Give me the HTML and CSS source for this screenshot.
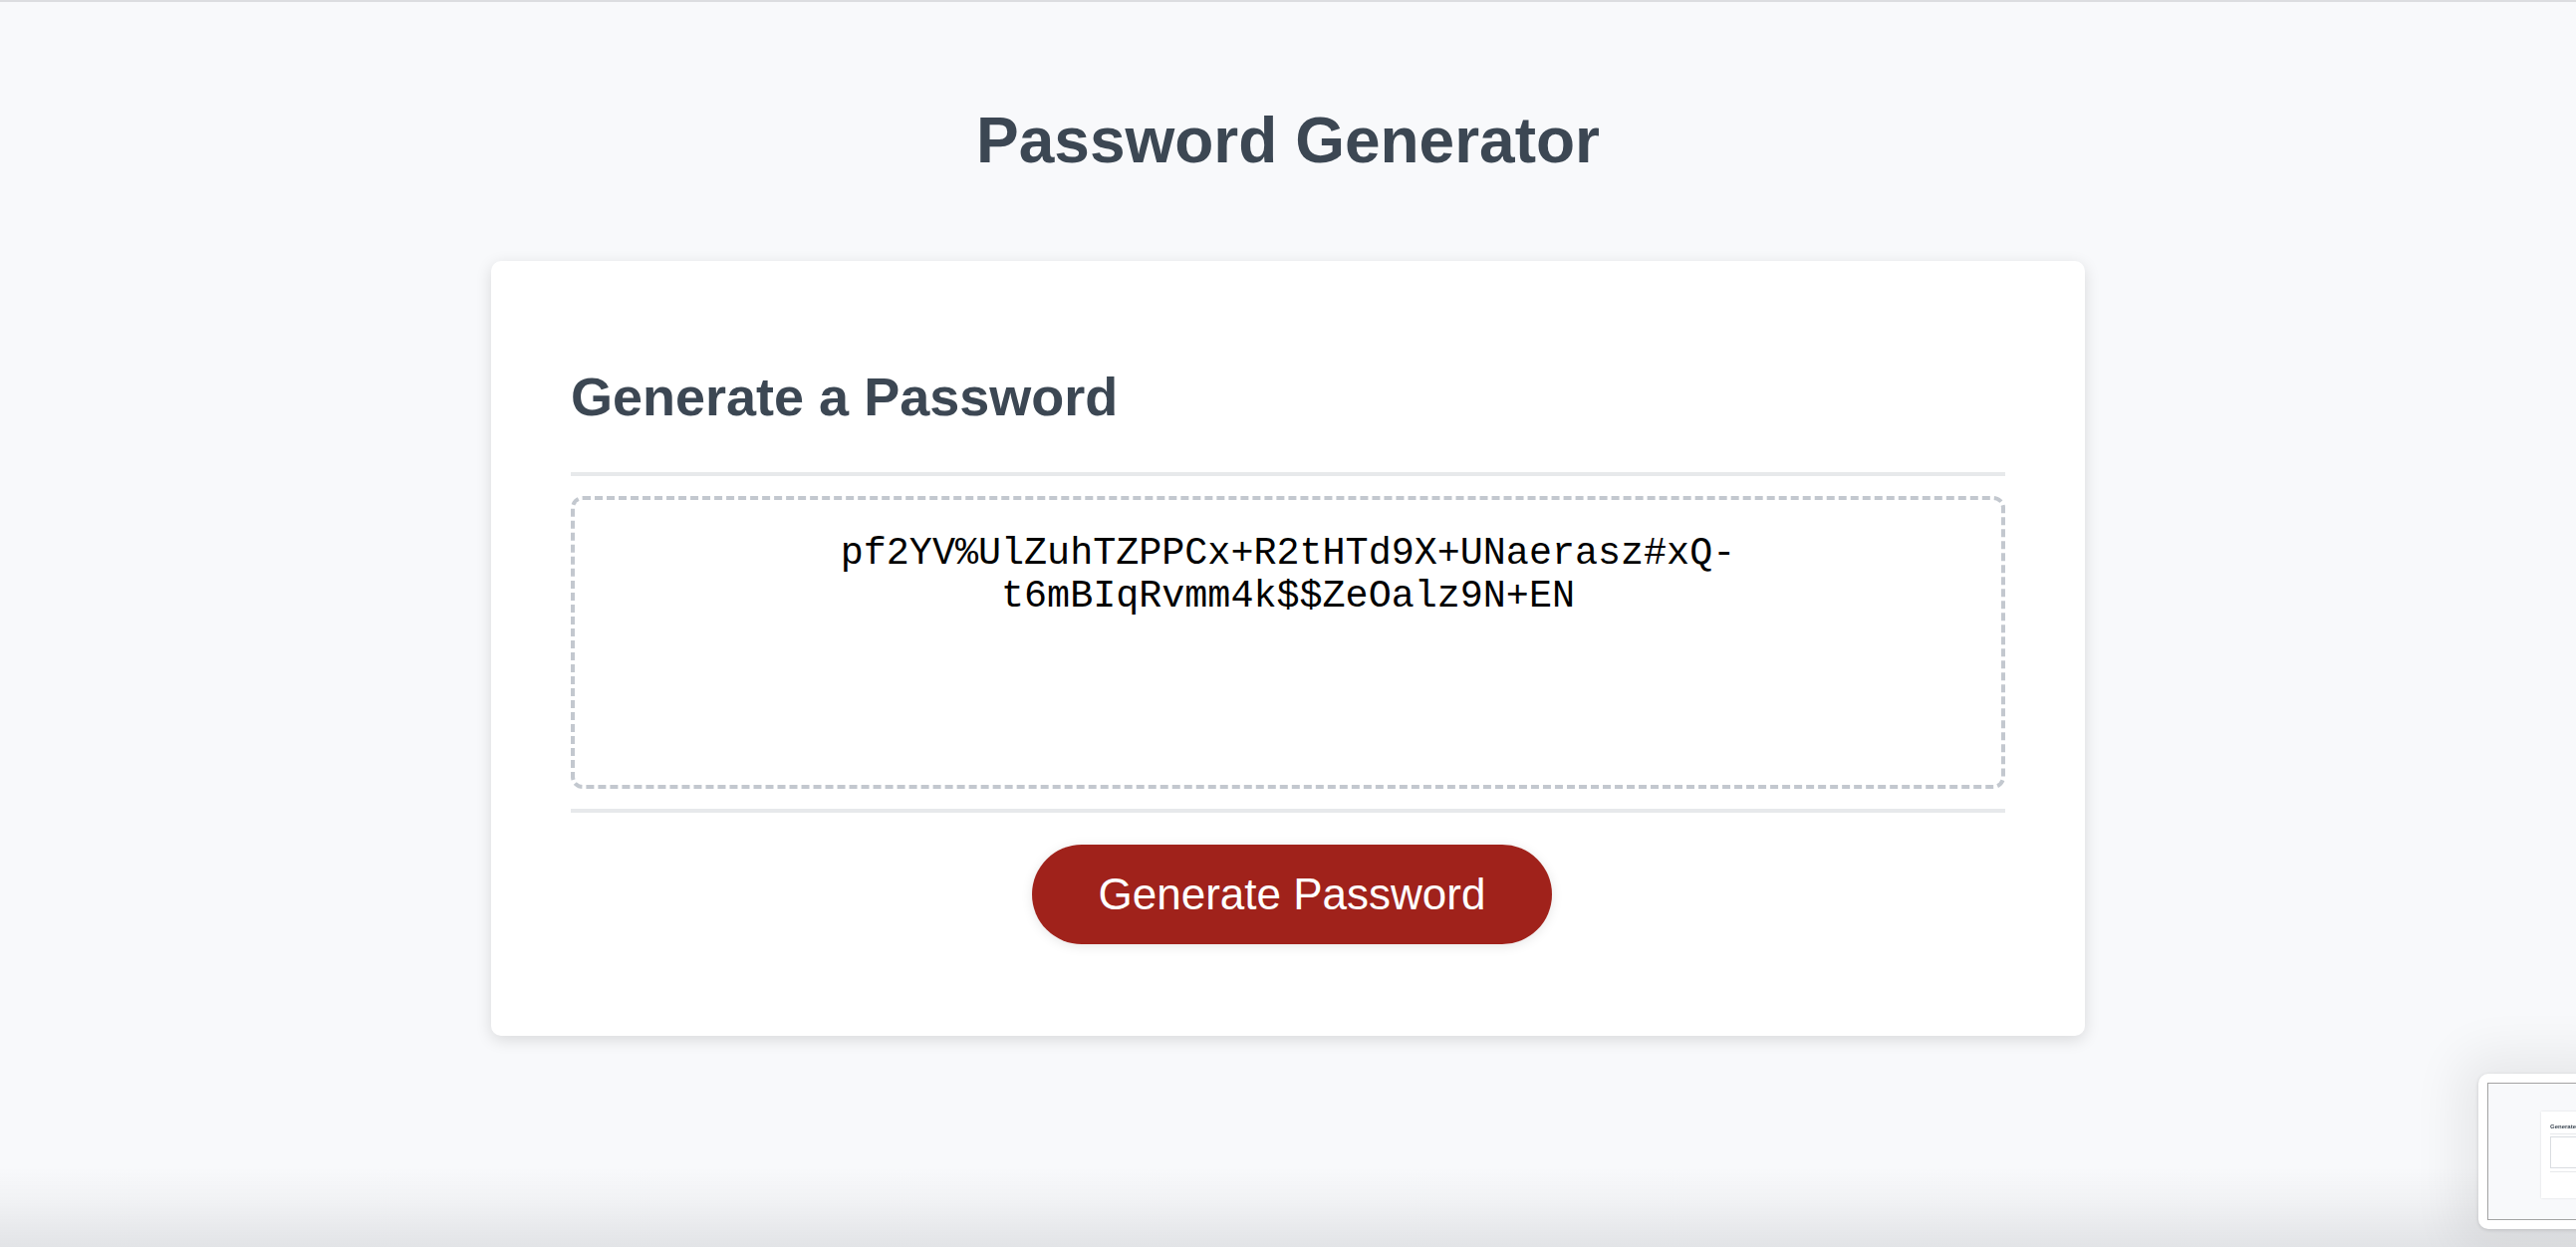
FILE: index.html
```html
<!DOCTYPE html>
<html lang="en">
<head>
<meta charset="UTF-8">
<title>Password Generator</title>
<link rel="stylesheet" href="styles.css">
</head>
<body>
<div class="topline"></div>
<div class="wrapper">
  <header class="page-header">
    <h1>Password Generator</h1>
  </header>
  <div class="card">
    <div class="card-header">
      <h2>Generate a Password</h2>
    </div>
    <div class="card-body">
      <textarea readonly class="password" aria-label="Generated Password">pf2YV%UlZuhTZPPCx+R2tHTd9X+UNaerasz#xQ-t6mBIqRvmm4k$$ZeOalz9N+EN</textarea>
    </div>
    <div class="card-footer">
      <button class="btn">Generate Password</button>
    </div>
  </div>
</div>
<div class="bottom-shade"></div>
<div class="thumb">
  <div class="thumb-img">
    <div class="mini-card">
      <div class="mini-title">Generate a Password</div>
      <div class="mini-line"></div>
      <div class="mini-box"></div>
      <div class="mini-line"></div>
    </div>
  </div>
</div>
</body>
</html>
```

FILE: styles.css
```css
*, *::before, *::after {
  box-sizing: border-box;
}

html, body {
  margin: 0;
  padding: 0;
  height: 100%;
  overflow: hidden;
}

body {
  font-family: "Liberation Sans", Arial, Helvetica, sans-serif;
  background-color: #f8f9fb;
}

.topline {
  height: 2px;
  background: #dcdde0;
}

.wrapper {
  padding: 60px 40px 0;
}

.page-header {
  text-align: center;
  padding: 0 40px 40px;
  color: #3c4753;
}

.page-header h1 {
  font-size: 64px;
  font-weight: bold;
  margin: 43px 0;
  line-height: 73.5px;
}

.card {
  background-color: #ffffff;
  border-radius: 10px;
  box-shadow: rgba(0, 0, 0, 0.13) 0 4px 16px 0;
  color: #3c4753;
  font-size: 36px;
  margin: 0 auto;
  max-width: 1600px;
  padding: 60px 80px;
}

.card-header h2 {
  font-size: 54px;
  font-weight: bold;
  margin: 45px 0;
  line-height: 62px;
}

.card-header::after,
.card-footer::before {
  content: " ";
  display: block;
  width: 100%;
  height: 4px;
  background: #e7e9eb;
}

.card-body {
  min-height: 200px;
}

.password {
  appearance: none;
  -webkit-appearance: none;
  display: block;
  width: 100%;
  height: 294px;
  margin: 20px 0;
  padding: 33px 30px 30px;
  border: 4px dashed #c3c8cf;
  border-radius: 12px;
  font-family: "Liberation Mono", "Courier New", monospace;
  font-size: 38.4px;
  line-height: 43.5px;
  color: #000000;
  background: #ffffff;
  text-align: center;
  resize: none;
  overflow: hidden;
  outline: none;
}

.card-footer {
  text-align: center;
}

.btn {
  border: none;
  background-color: #a0221b;
  border-radius: 50px;
  box-shadow: rgba(0, 0, 0, 0.1) 0 2px 12px 0;
  color: #ffffff;
  display: inline-block;
  font-family: "Liberation Sans", Arial, Helvetica, sans-serif;
  font-size: 44px;
  line-height: 44px;
  margin: 32px 32px 32px 40px;
  padding: 28px 67px;
  text-align: center;
  cursor: pointer;
}

.bottom-shade {
  position: fixed;
  left: 0;
  right: 0;
  bottom: 0;
  height: 80px;
  background: linear-gradient(to bottom, rgba(40, 45, 55, 0) 0%, rgba(40, 45, 55, 0.03) 40%, rgba(40, 45, 55, 0.1) 100%);
  pointer-events: none;
}

.thumb {
  position: fixed;
  left: 2488px;
  top: 1078px;
  width: 130px;
  height: 156px;
  padding: 9px;
  background: #ffffff;
  border-radius: 10px;
  box-shadow: 0 0 50px 20px rgba(0, 0, 0, 0.07), 0 1px 4px rgba(0, 0, 0, 0.15);
}

.thumb-img {
  height: 100%;
  border: 1px solid #a3a3a3;
  background: #f8f9fb;
  padding: 28px 0 0 53px;
}

.mini-card {
  background: #ffffff;
  height: 87px;
  padding: 11px 0 0 9px;
  box-shadow: 0 0 2px rgba(0, 0, 0, 0.12);
}

.mini-title {
  font-size: 6px;
  font-weight: bold;
  color: #3c4753;
  white-space: nowrap;
  line-height: 8px;
}

.mini-line {
  height: 1px;
  background: #e7e9eb;
  margin-top: 3px;
}

.mini-box {
  height: 32px;
  margin-top: 2px;
  border: 1px solid #dadde1;
  border-right: none;
}
```
